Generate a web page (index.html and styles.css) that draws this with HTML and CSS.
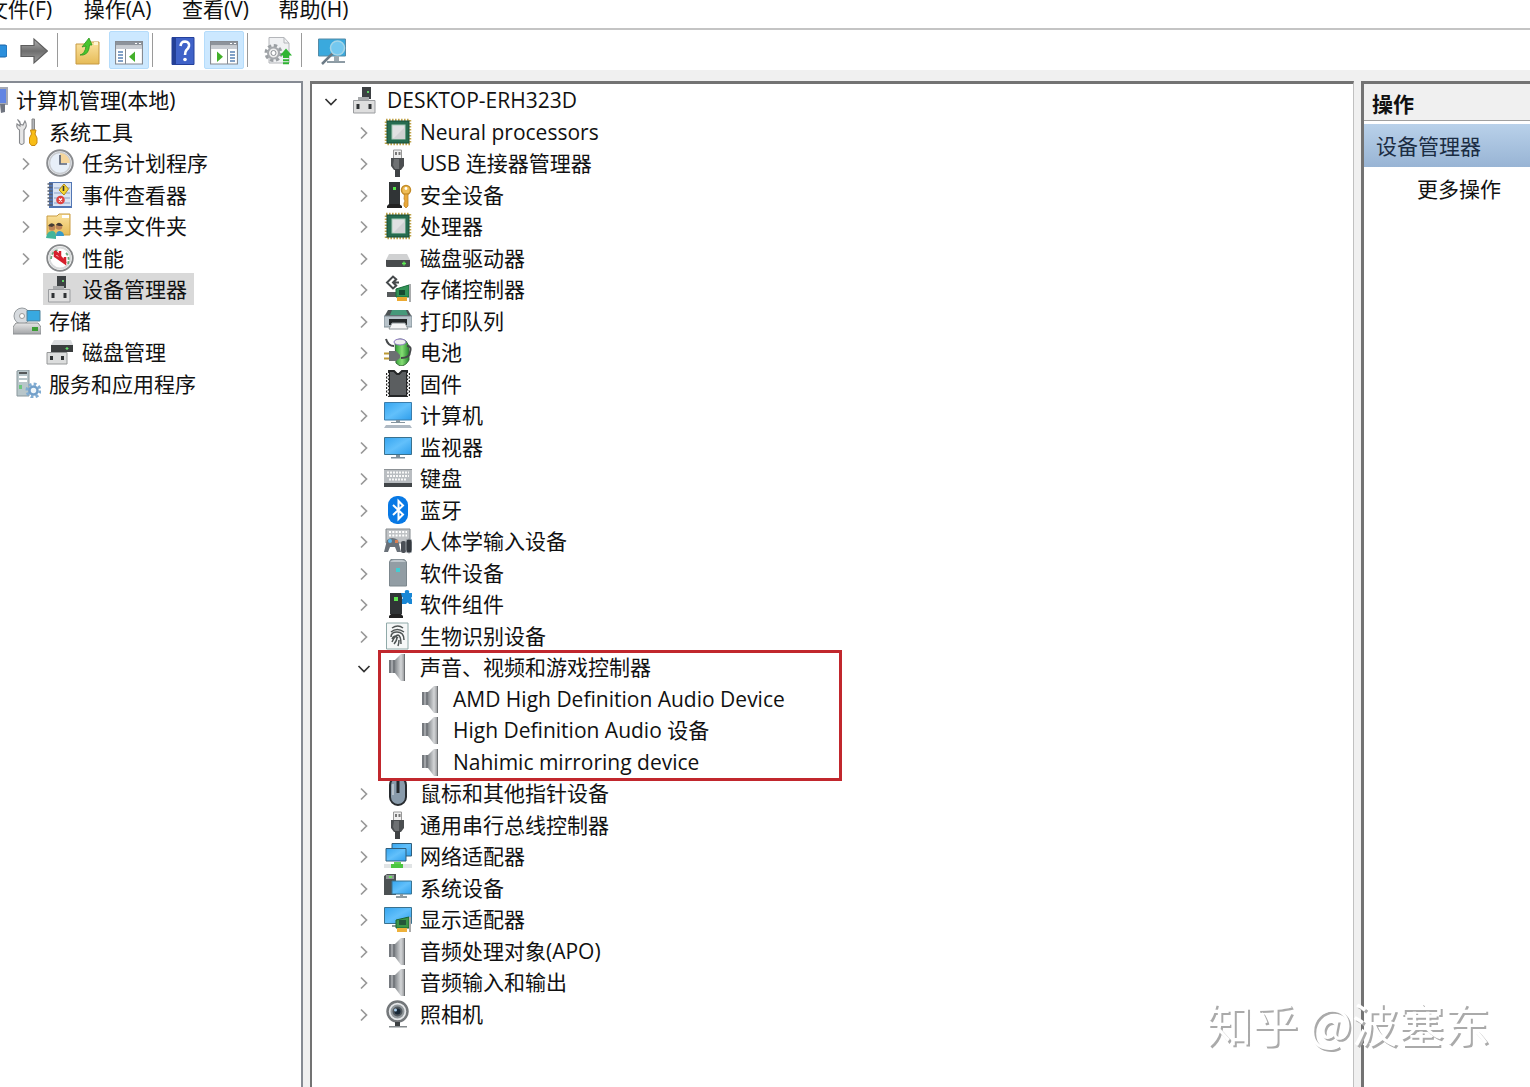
FILE: index.html
```html
<!DOCTYPE html>
<html lang="zh-CN">
	<head>
		<meta charset="UTF-8">
		<title>计算机管理</title>
		<link rel="stylesheet" href="styles.css">
	</head>
	<body>
		<!-- icon set -->
		<svg class="sprite" aria-hidden="true">
			<defs>
				<linearGradient id="gBlue" x1="0" y1="0" x2="1" y2="1"><stop offset="0" stop-color="#35a5f0"/><stop offset=".5" stop-color="#62c0fb"/><stop offset="1" stop-color="#2e9eeb"/></linearGradient>
				<linearGradient id="gMetal" x1="0" y1="0" x2="1" y2="0"><stop offset="0" stop-color="#85898d"/><stop offset=".6" stop-color="#d4d6d8"/><stop offset="1" stop-color="#8c8e91"/></linearGradient>
				<linearGradient id="gSilver" x1="0" y1="0" x2="0" y2="1"><stop offset="0" stop-color="#e6e6e6"/><stop offset="1" stop-color="#a3a5a8"/></linearGradient>
				<linearGradient id="gArrow" x1="0" y1="0" x2="0" y2="1"><stop offset="0" stop-color="#b4b4b4"/><stop offset=".5" stop-color="#6e6e6e"/><stop offset="1" stop-color="#a0a0a0"/></linearGradient>
				<linearGradient id="gFolder" x1="0" y1="0" x2="0" y2="1"><stop offset="0" stop-color="#fbe3a0"/><stop offset="1" stop-color="#e6bb57"/></linearGradient>
				<linearGradient id="gGreen" x1="0" y1="0" x2="1" y2="0"><stop offset="0" stop-color="#2c9a33"/><stop offset=".5" stop-color="#86de74"/><stop offset="1" stop-color="#23832c"/></linearGradient>
			</defs>
			<symbol id="right" viewBox="0 0 12 16"><path d="M3 2.500L8.500 8L3 13.500" fill="none" stroke="#999" stroke-width="1.700"/></symbol>
			<symbol id="down" viewBox="0 0 14 14"><path d="M1.500 5L7 10.500L12.500 5" fill="none" stroke="#333" stroke-width="1.700"/></symbol>
			<symbol id="back" viewBox="0 0 28 28"><path d="M0 14L12 2V8H26Q28 8 28 10V18Q28 20 26 20H12V26Z" fill="#2b8fdc" stroke="#1a64a8"/></symbol>
			<symbol id="forward" viewBox="0 0 28 28"><path d="M1 8.500H14V2L27.500 14L14 26V19.500H1Z" fill="url(#gArrow)" stroke="#5d5d5d" stroke-width="1.200"/></symbol>
			<symbol id="folderup" viewBox="0 0 28 28">
				<path d="M2 7H12L14 5H25V27H2Z" fill="url(#gFolder)" stroke="#c79a42"/>
				<path d="M20 5H24V8H20Z" fill="#fff4cf"/>
				<path d="M6 18Q11 17 12 9L8 10L15 1L18 8L15.500 8Q15 17 9 18Z" fill="#49c52e" stroke="#2c981d" stroke-width=".8"/>
			</symbol>
			<symbol id="paneleft" viewBox="0 0 28 28">
				<path d="M.5 4.500H27.500V27H.5Z" fill="#fff" stroke="#858a91" stroke-width="1.200"/>
				<path d="M1 5H27V8.500H1Z" fill="#8d939b"/><path d="M20 6h2v1h-2zM24 6h2v1h-2z" fill="#fff"/>
				<path d="M1 9H27V12H1Z" fill="#c8ccd2"/>
				<path d="M10.500 12V27" stroke="#858a91"/>
				<path d="M3 15h5M3 18h5M3 21h5M3 24h5" stroke="#5a83b5" stroke-width="1.300"/>
				<path d="M20 14.500V25L14 19.700Z" fill="#43b02a"/>
			</symbol>
			<symbol id="paneright" viewBox="0 0 28 28">
				<path d="M.5 4.500H27.500V27H.5Z" fill="#fff" stroke="#858a91" stroke-width="1.200"/>
				<path d="M1 5H27V8.500H1Z" fill="#8d939b"/><path d="M20 6h2v1h-2zM24 6h2v1h-2z" fill="#fff"/>
				<path d="M1 9H27V12H1Z" fill="#c8ccd2"/>
				<path d="M17.500 12V27" stroke="#858a91"/>
				<path d="M20 15h5M20 18h5M20 21h5M20 24h5" stroke="#5a83b5" stroke-width="1.300"/>
				<path d="M7 14.500V25L13 19.700Z" fill="#43b02a"/>
			</symbol>
			<symbol id="help" viewBox="0 0 28 28">
				<path d="M3 .5H25V27.500H3Z" fill="#3f62c8" stroke="#24409b"/><path d="M3 .5H7V27.500H3Z" fill="#233f96"/>
				<path d="M11.500 9Q12 4.500 16 4.500Q20.500 5 20 9Q19.500 11.500 17.500 13Q16 14.500 16 18" fill="none" stroke="#fff" stroke-width="2.600"/><circle cx="16" cy="22.500" r="1.800" fill="#fff"/>
			</symbol>
			<symbol id="update" viewBox="0 0 28 28">
				<path d="M5 .5H20L25 6V26H5Z" fill="#f0f1f3" stroke="#b4b6ba"/><path d="M20 .5V6H25" fill="none" stroke="#b4b6ba"/>
				<circle cx="9.500" cy="16" r="7.500" fill="none" stroke="#9b9fa3" stroke-width="3" stroke-dasharray="3.400 2.500"/>
				<circle cx="9.500" cy="16" r="5.500" fill="#eee" stroke="#a5a8ac" stroke-width="2"/><circle cx="9.500" cy="16" r="2.500" fill="#fff" stroke="#8e9297"/>
				<path d="M22 11.500L28 18.500H25V21H19V18.500H16ZM19 22.200h6v2h-6zM19 25.300h6v2h-6z" fill="#2fb432"/>
			</symbol>
			<symbol id="scan" viewBox="0 0 28 28">
				<path d="M.5 2H27.500V19H.5Z" fill="#3aa9dd" stroke="#558ba6"/><path d="M9 24h18v2H9z" fill="#8d9ba4"/><path d="M16 19h5v5h-5z" fill="#9daab2"/>
				<path d="M4 27L15 16" stroke="#6c7b86" stroke-width="2.500"/><circle cx="19.500" cy="11" r="7" fill="#74c8ef" stroke="#a5d5e7" stroke-width="1.500"/>
			</symbol>
			<symbol id="mgmt" viewBox="0 0 28 28"><path d="M4 2H27V18H4Z" fill="#6285e2" stroke="#a6a9b3" stroke-width="2"/><path d="M20 18h5v8l-4 1z" fill="#707580"/></symbol>
			<symbol id="tools" viewBox="0 0 28 28">
				<path d="M4.500 1.500L7 4V8L4 6Q3 10 6.500 12V25Q8.500 28 11 25V12Q15 8 12 3L10 7L8 6.500Z" fill="#e6e6e6" stroke="#85878b" stroke-width="1.100"/>
				<path d="M19 1H21.500V12H19Z" fill="#b2b5b9" stroke="#888"/><path d="M17.500 12H23L22 16L24 20V25L22 27.500H18.500L16.500 25V20L18.500 16Z" fill="#f8bd16" stroke="#c88910"/>
			</symbol>
			<symbol id="clock" viewBox="0 0 28 28"><circle cx="14" cy="14" r="12.800" fill="#f5f7fa" stroke="#8b8d90" stroke-width="2"/><circle cx="14" cy="14" r="10.500" fill="#e7eff8" stroke="#c9ccd0" stroke-width="1.500"/><path d="M14 4A10 10 0 0 1 24 14H14Z" fill="#f4d59c"/><path d="M14 6V15H21" fill="none" stroke="#596376" stroke-width="1.700"/></symbol>
			<symbol id="events" viewBox="0 0 28 28"><path d="M3 1H26V27H3Z" fill="#5276b4"/><path d="M7 2H25V25H7Z" fill="#dae4f3"/><path d="M8 7h16M8 12h16M8 17h16M8 22h16" stroke="#8ba1c8"/><path d="M1.500 3h5M1.500 6.500h5M1.500 10h5M1.500 13.500h5M1.500 17h5M1.500 20.500h5M1.500 24h5" stroke="#59616f" stroke-width="1.500"/><path d="M18 3L22.500 8L18 14L13 9Z" fill="#f5d738" stroke="#b58e17"/><path d="M17.500 5v5" stroke="#333" stroke-width="1.600"/><circle cx="14.500" cy="19" r="4.300" fill="#df413f"/><path d="M13 17.500l3 3m0-3l-3 3" stroke="#fff" stroke-width="1.300"/></symbol>
			<symbol id="share" viewBox="0 0 28 28"><path d="M1 4H11L13 2H24V23H1Z" fill="url(#gFolder)" stroke="#c99c43"/><path d="M16 3h7v3h-7z" fill="#fff"/><path d="M0 26Q1 19 6 19Q10 19 10 24V27Z" fill="#42b59b"/><path d="M10 24Q10 19 14 19Q18 20 18 24Z" fill="#3899c7"/><circle cx="6" cy="15.500" r="3.300" fill="#bd8557"/><circle cx="13" cy="14.500" r="3.300" fill="#bd8557"/><path d="M2 14Q5 9 9 13L6 15ZM10 13Q13 8 17 14L13 14Z" fill="#453c35"/></symbol>
			<symbol id="perf" viewBox="0 0 28 28"><circle cx="14" cy="14" r="12.800" fill="#fff" stroke="#858789" stroke-width="1.800"/><circle cx="14" cy="14" r="10.500" fill="none" stroke="#d9dbdc" stroke-width="2"/><path d="M5 15Q6 6 13 6M20 9Q24 13 22 20" fill="none" stroke="#69a67a" stroke-width="1.800" stroke-dasharray="3 1.500"/><path d="M9 7V12L19 19V13M9 7L20 19M14 7V12" fill="none" stroke="#d6202c" stroke-width="2.500"/></symbol>
			<symbol id="devmgr" viewBox="0 0 28 28"><path d="M11 1H20V13H11Z" fill="#3d4143"/><path d="M16 5h2v2h-2z" fill="#60d165"/><path d="M7 11H18V15H7Z" fill="#a9abad"/><path d="M2.500 14.500H24V27H2.500Z" fill="#dedede" stroke="#9b9da0"/><path d="M5.500 18h3v5h-3zM17.500 18h3v5h-3z" fill="#2f3234"/></symbol>
			<symbol id="storage" viewBox="0 0 28 28"><circle cx="9" cy="9" r="8" fill="#d7dbdf" stroke="#969b9f"/><circle cx="9" cy="9" r="2.500" fill="#fff" stroke="#999"/><path d="M14 3.500H27V14H14Z" fill="#38a9e1" stroke="#4f819a"/><path d="M3 16H25L28 20V27H0V20Z" fill="url(#gSilver)" stroke="#8d9092"/><path d="M19 20h6v4h-6z" fill="#3e9d37"/></symbol>
			<symbol id="diskmgr" viewBox="0 0 28 28"><path d="M8 2H25L27 7H5Z" fill="#dbdddf"/><path d="M5 7H27V14H5Z" fill="#3b3e3f"/><path d="M21 9v3m-1.500-1.500h3" stroke="#60de69" stroke-width="1.200"/><path d="M1 14.500H21V26H1Z" fill="#dcdddd" stroke="#969899"/><path d="M4 18h3v4H4zM15 18h3v4h-3z" fill="#2f3234"/></symbol>
			<symbol id="services" viewBox="0 0 28 28"><path d="M4 1L7 0H16V26H4Z" fill="#b8c6ca" stroke="#89979c"/><path d="M6 3h8" stroke="#333" stroke-width="1.500"/><path d="M6 7h8M6 11h8" stroke="#fff" stroke-width="1.800"/><path d="M6 15h3v4H6z" fill="#6bc67d"/><circle cx="20.500" cy="20.500" r="6.500" fill="none" stroke="#80acd2" stroke-width="3" stroke-dasharray="2.800 2.200"/><circle cx="20.500" cy="20.500" r="4" fill="#eef5fa" stroke="#719fc9" stroke-width="2.500"/></symbol>
			<symbol id="cpu" viewBox="0 0 28 28"><rect x="2" y="2" width="24" height="24" fill="none" stroke="#c1a54c" stroke-width="2.500" stroke-dasharray="1.600 1.400"/><rect x="3" y="3" width="22" height="22" fill="#266c50" stroke="#174d39"/><rect x="8" y="7" width="13" height="14" fill="#e0e1e2" stroke="#a6cbb8"/><path d="M21 9V21H9Z" fill="#d0d2d4"/></symbol>
			<symbol id="usb" viewBox="0 0 28 28"><path d="M9.500 1H17.500V10H9.500Z" fill="#eee" stroke="#999"/><path d="M11 3h2v3h-2zM14.500 3h2v3h-2z" fill="#777"/><path d="M7 9H20V17L17 21H10L7 17Z" fill="#4b4e50"/><path d="M10 10H15V20H11L9 16Z" fill="#6e7173"/><path d="M11 20H16V28H11Z" fill="#3f4244"/></symbol>
			<symbol id="security" viewBox="0 0 28 28"><path d="M5 1H16V24H5Z" fill="#303436"/><path d="M3 27V25L5 23H15L18 25V27Z" fill="#222"/><path d="M9 6h3v3H9z" fill="#55e548"/><circle cx="22" cy="9" r="4.500" fill="#efbd55" stroke="#c38b27" stroke-width="1.500"/><circle cx="22" cy="7.500" r="1.400" fill="#fff"/><path d="M20.500 13H24V25L22 27L20 25V22L21 20L20 18Z" fill="#eaa93a" stroke="#bf8526" stroke-width=".8"/></symbol>
			<symbol id="disk" viewBox="0 0 28 28"><path d="M5 10H23L26 16H2Z" fill="#d0d1d2"/><path d="M2 16H26V22Q26 23 25 23H3Q2 23 2 22Z" fill="#484b4d"/><path d="M20 17.500v4m-2-2h4" stroke="#5ceb55" stroke-width="1.300"/></symbol>
			<symbol id="controller" viewBox="0 0 28 28"><path d="M13 5L9 1.500L3 7.500L9 13.500L13 10M15 7.500H9M12 4.500L9 7.500L12 10.500" fill="none" stroke="#45494b" stroke-width="2"/><path d="M3 17H14V22H3Z" fill="#565a5c"/><path d="M12 14L25 10V22H12Z" fill="#329256" stroke="#176b3a"/><path d="M15 15h6v5h-6z" fill="#184a31"/><path d="M26 9V27" stroke="#a9abac" stroke-width="2"/><path d="M13 22H23V26H13Z" fill="#ecaa32"/></symbol>
			<symbol id="printer" viewBox="0 0 28 28"><path d="M4 3H24L28 10H0Z" fill="#4c5355"/><path d="M8 3H22L24 8H6Z" fill="#46997a"/><path d="M0 9H28V20H0Z" fill="#b8c3ca" stroke="#7e8c94"/><path d="M5 12H23V18H5Z" fill="#242829"/><path d="M8 16H21L24 22H5Z" fill="#f5f5f5" stroke="#8e9598"/></symbol>
			<symbol id="battery" viewBox="0 0 28 28"><path d="M11 3Q16-1 22 3L25 8V22Q22 28 16 28L12 25Z" fill="url(#gGreen)" stroke="#3b6c3d"/><ellipse cx="16" cy="4" rx="6" ry="3" fill="#eee" stroke="#8d78c4"/><path d="M2 1Q4 8 10 8M23 8Q28 8 26 14Q26 20 17 20" fill="none" stroke="#45484a" stroke-width="2"/><path d="M0 15.500h8M0 20.500h8" stroke="#bd9a35" stroke-width="2"/><path d="M5 13H12L16 17V20L12 23H5Z" fill="#6c7072"/></symbol>
			<symbol id="firmware" viewBox="0 0 28 28"><path d="M5 1H10L13 4H15L18 1H23V26H5Z" fill="#5b5e60" stroke="#252728" stroke-width="2"/><path d="M4 3V26M24 3V26" stroke="#222" stroke-width="4" stroke-dasharray="2 1.500"/><path d="M4 3V26M24 3V26" stroke="#ddd" stroke-width="2" stroke-dasharray="2 1.500"/></symbol>
			<symbol id="computer" viewBox="0 0 28 28"><path d="M.5 1.500H27.500V19H.5Z" fill="url(#gBlue)" stroke="#3a7dac"/><path d="M12 19h4v2h-4zM7 21h14v1H7z" fill="#8796a0"/><path d="M2 24H26L28 27H0Z" fill="#afb9c3"/></symbol>
			<symbol id="monitor" viewBox="0 0 28 28"><path d="M.5 4.500H27.500V21.500H.5Z" fill="url(#gBlue)" stroke="#3a718e"/><path d="M12 22h4v2h-4zM7 24h14v1.500H7z" fill="#7f909b"/></symbol>
			<symbol id="keyboard" viewBox="0 0 28 28"><path d="M0 5H28V19H0Z" fill="#b9bdc1"/><path d="M0 19H28V23H0Z" fill="#424649"/><path d="M3 8.500h22M3 12h22M5 15.500h18" stroke="#f8f8f8" stroke-width="2" stroke-dasharray="2 1"/><path d="M0 5.500H28" stroke="#8d9296"/></symbol>
			<symbol id="bluetooth" viewBox="0 0 28 28"><rect x="4" y="0" width="20" height="28" rx="9" fill="#0879e5"/><path d="M9 9L19 18.500L14.500 23V5L19 9.500L9 19" fill="none" stroke="#fff" stroke-width="2"/></symbol>
			<symbol id="hid" viewBox="0 0 28 28"><path d="M2 2H26V16H2Z" fill="#bfc2c5" stroke="#84898d"/><path d="M5 5h18M5 8.500h18" stroke="#fff" stroke-width="2" stroke-dasharray="2 1.300"/><path d="M3 13Q8 9 14 13L17 25H13L11 20H6L4 25H0Z" fill="#697078"/><circle cx="6" cy="14" r="2" fill="#5bb7ea"/><path d="M11 13h3v3h-3z" fill="#da8053"/><rect x="17" y="14" width="5" height="12" rx="2" fill="#4b5057"/><rect x="22" y="12" width="6" height="14" rx="3" fill="#353a40" stroke="#949aa0"/></symbol>
			<symbol id="softdev" viewBox="0 0 28 28"><path d="M5.500 3Q6 0 9 0H18Q21 0 22.500 3V27H5.500Z" fill="#929da4" stroke="#7c878d"/><path d="M6 3Q8 1 10 1H18Q20 1 22 3Z" fill="#bfc7cc"/><path d="M12 9h4v4h-4z" fill="#43cdd3"/></symbol>
			<symbol id="softcomp" viewBox="0 0 28 28"><path d="M6 3H18V24H6Z" fill="#303436"/><path d="M5 28V26L7 24H17L19 26V28Z" fill="#222"/><path d="M10 7h4v4h-4z" fill="#5de64e"/><path d="M17 3H21Q20 0 23 0Q26 0 25 3H28V7Q26 8 28 9V14H25Q24 11 22 14H18V9Q20 8 18 7Z" fill="#1987d5"/></symbol>
			<symbol id="finger" viewBox="0 0 28 28"><path d="M2.500 1H24V27H2.500Z" fill="#f6f8f8" stroke="#90aaa9"/><path d="M8 6Q14 2 19 6M7 10Q13 5 20 10M7 15Q7 10 13 10Q20 10 20 18M8 20Q11 13 14 13Q17 14 17 22M10 22Q13 19 13 15M8 17Q10 12 14 16M14 24Q15 21 15 18" fill="none" stroke="#4f5555" stroke-width="1.500"/></symbol>
			<symbol id="speaker" viewBox="0 0 28 28"><path d="M5 7H11V20H5Z" fill="#75797e"/><path d="M7 7h2v13H7z" fill="#a1a4a8"/><path d="M11 7L17 1H21V28H17L11 20Z" fill="url(#gMetal)"/><path d="M20.500 1V28" stroke="#6f7275"/></symbol>
			<symbol id="mouse" viewBox="0 0 28 28"><rect x="6" y="-2" width="16" height="28" rx="8" fill="#899bab" stroke="#272b2f" stroke-width="2"/><path d="M14 0V14" stroke="#25292c" stroke-width="3"/><path d="M9 5V16" stroke="#d5dce1" stroke-width="1.200"/></symbol>
			<symbol id="network" viewBox="0 0 28 28"><path d="M8 1.500H27.500V14H8Z" fill="url(#gBlue)" stroke="#315f7c"/><path d="M2 6.500H22V19H2Z" fill="url(#gBlue)" stroke="#315f7c"/><path d="M10 20h7v3h-7z" fill="#62d154"/><path d="M0 22H28V26H0Z" fill="#e1e4e5"/><path d="M7 22H19V26H7Z" fill="#4cc540"/></symbol>
			<symbol id="system" viewBox="0 0 28 28"><path d="M0 2L3 0H12V21H0Z" fill="#4c5153"/><path d="M2 1h8v4H2z" fill="#8d9593"/><path d="M5 2h3v2H5z" fill="#6ade60"/><path d="M8 7H27.500V20H8Z" fill="url(#gBlue)" stroke="#3b7593"/><path d="M16 20h3v2h-3zM12 22h11v2H12z" fill="#8e9aa0"/></symbol>
			<symbol id="display" viewBox="0 0 28 28"><path d="M.5 2.500H27.500V18.500H.5Z" fill="url(#gBlue)" stroke="#3a718e"/><path d="M8 20h5v2H8z" fill="#899"/><path d="M12 15L25 12V23H12Z" fill="#3b9547" stroke="#1d6430"/><path d="M15 15h7v5h-7z" fill="#24563a"/><path d="M26 12V27" stroke="#aaa" stroke-width="2"/><path d="M13 23H23V27H13Z" fill="#eeb13b"/></symbol>
			<symbol id="camera" viewBox="0 0 28 28"><circle cx="13.500" cy="11.500" r="10" fill="#e5e7e9" stroke="#73777a" stroke-width="2.500"/><circle cx="13.500" cy="11.500" r="6" fill="#51585e" stroke="#92989c" stroke-width="2"/><circle cx="13.500" cy="11.500" r="3" fill="#182735"/><circle cx="11.500" cy="10" r="1.500" fill="#a8cbea"/><path d="M11 22h5v4h-5z" fill="#3c4042"/><path d="M5 26H23V27.500H5Z" fill="#858a8d"/></symbol>
		</svg>

		<nav class="menubar">
			<button>文件(F)</button>
			<button>操作(A)</button>
			<button>查看(V)</button>
			<button>帮助(H)</button>
		</nav>

		<div class="toolbar">
			<button aria-label="后退"><svg class="icon"><use href="#back"/></svg></button>
			<button aria-label="前进"><svg class="icon"><use href="#forward"/></svg></button>
			<span class="sep"></span>
			<button aria-label="向上"><svg class="icon"><use href="#folderup"/></svg></button>
			<button class="on" aria-label="显示控制台树"><svg class="icon"><use href="#paneleft"/></svg></button>
			<span class="sep"></span>
			<button aria-label="帮助"><svg class="icon"><use href="#help"/></svg></button>
			<button class="on" aria-label="显示操作窗格"><svg class="icon"><use href="#paneright"/></svg></button>
			<span class="sep"></span>
			<button aria-label="更新驱动程序"><svg class="icon"><use href="#update"/></svg></button>
			<span class="sep"></span>
			<button aria-label="扫描检测硬件改动"><svg class="icon"><use href="#scan"/></svg></button>
		</div>

		<main class="panes">
			<section class="pane console">
				<ul class="tree">
					<li><span class="none"></span><span class="node"><svg class="icon"><use href="#mgmt"/></svg>计算机管理(本地)</span></li>
					<li class="l1"><span class="none"></span><span class="node"><svg class="icon"><use href="#tools"/></svg>系统工具</span></li>
					<li class="l2"><button aria-label="展开"><svg><use href="#right"/></svg></button><span class="node"><svg class="icon"><use href="#clock"/></svg>任务计划程序</span></li>
					<li class="l2"><button aria-label="展开"><svg><use href="#right"/></svg></button><span class="node"><svg class="icon"><use href="#events"/></svg>事件查看器</span></li>
					<li class="l2"><button aria-label="展开"><svg><use href="#right"/></svg></button><span class="node"><svg class="icon"><use href="#share"/></svg>共享文件夹</span></li>
					<li class="l2"><button aria-label="展开"><svg><use href="#right"/></svg></button><span class="node"><svg class="icon"><use href="#perf"/></svg>性能</span></li>
					<li class="l2"><span class="none"></span><span class="node selected"><svg class="icon"><use href="#devmgr"/></svg>设备管理器</span></li>
					<li class="l1"><span class="none"></span><span class="node"><svg class="icon"><use href="#storage"/></svg>存储</span></li>
					<li class="l2"><span class="none"></span><span class="node"><svg class="icon"><use href="#diskmgr"/></svg>磁盘管理</span></li>
					<li class="l1"><span class="none"></span><span class="node"><svg class="icon"><use href="#services"/></svg>服务和应用程序</span></li>
				</ul>
			</section>

			<section class="pane devices">
				<ul class="tree">
					<li><button aria-label="折叠"><svg><use href="#down"/></svg></button><span class="node"><svg class="icon"><use href="#devmgr"/></svg>DESKTOP-ERH323D</span></li>
					<li class="l1"><button aria-label="展开"><svg><use href="#right"/></svg></button><span class="node"><svg class="icon"><use href="#cpu"/></svg>Neural processors</span></li>
					<li class="l1"><button aria-label="展开"><svg><use href="#right"/></svg></button><span class="node"><svg class="icon"><use href="#usb"/></svg>USB 连接器管理器</span></li>
					<li class="l1"><button aria-label="展开"><svg><use href="#right"/></svg></button><span class="node"><svg class="icon"><use href="#security"/></svg>安全设备</span></li>
					<li class="l1"><button aria-label="展开"><svg><use href="#right"/></svg></button><span class="node"><svg class="icon"><use href="#cpu"/></svg>处理器</span></li>
					<li class="l1"><button aria-label="展开"><svg><use href="#right"/></svg></button><span class="node"><svg class="icon"><use href="#disk"/></svg>磁盘驱动器</span></li>
					<li class="l1"><button aria-label="展开"><svg><use href="#right"/></svg></button><span class="node"><svg class="icon"><use href="#controller"/></svg>存储控制器</span></li>
					<li class="l1"><button aria-label="展开"><svg><use href="#right"/></svg></button><span class="node"><svg class="icon"><use href="#printer"/></svg>打印队列</span></li>
					<li class="l1"><button aria-label="展开"><svg><use href="#right"/></svg></button><span class="node"><svg class="icon"><use href="#battery"/></svg>电池</span></li>
					<li class="l1"><button aria-label="展开"><svg><use href="#right"/></svg></button><span class="node"><svg class="icon"><use href="#firmware"/></svg>固件</span></li>
					<li class="l1"><button aria-label="展开"><svg><use href="#right"/></svg></button><span class="node"><svg class="icon"><use href="#computer"/></svg>计算机</span></li>
					<li class="l1"><button aria-label="展开"><svg><use href="#right"/></svg></button><span class="node"><svg class="icon"><use href="#monitor"/></svg>监视器</span></li>
					<li class="l1"><button aria-label="展开"><svg><use href="#right"/></svg></button><span class="node"><svg class="icon"><use href="#keyboard"/></svg>键盘</span></li>
					<li class="l1"><button aria-label="展开"><svg><use href="#right"/></svg></button><span class="node"><svg class="icon"><use href="#bluetooth"/></svg>蓝牙</span></li>
					<li class="l1"><button aria-label="展开"><svg><use href="#right"/></svg></button><span class="node"><svg class="icon"><use href="#hid"/></svg>人体学输入设备</span></li>
					<li class="l1"><button aria-label="展开"><svg><use href="#right"/></svg></button><span class="node"><svg class="icon"><use href="#softdev"/></svg>软件设备</span></li>
					<li class="l1"><button aria-label="展开"><svg><use href="#right"/></svg></button><span class="node"><svg class="icon"><use href="#softcomp"/></svg>软件组件</span></li>
					<li class="l1"><button aria-label="展开"><svg><use href="#right"/></svg></button><span class="node"><svg class="icon"><use href="#finger"/></svg>生物识别设备</span></li>
					<li class="l1 sound"><button aria-label="折叠"><svg><use href="#down"/></svg></button><span class="node"><svg class="icon"><use href="#speaker"/></svg>声音、视频和游戏控制器</span><span class="mark"></span></li>
					<li class="l2"><span class="none"></span><span class="node"><svg class="icon"><use href="#speaker"/></svg>AMD High Definition Audio Device</span></li>
					<li class="l2"><span class="none"></span><span class="node"><svg class="icon"><use href="#speaker"/></svg>High Definition Audio 设备</span></li>
					<li class="l2"><span class="none"></span><span class="node"><svg class="icon"><use href="#speaker"/></svg>Nahimic mirroring device</span></li>
					<li class="l1"><button aria-label="展开"><svg><use href="#right"/></svg></button><span class="node"><svg class="icon"><use href="#mouse"/></svg>鼠标和其他指针设备</span></li>
					<li class="l1"><button aria-label="展开"><svg><use href="#right"/></svg></button><span class="node"><svg class="icon"><use href="#usb"/></svg>通用串行总线控制器</span></li>
					<li class="l1"><button aria-label="展开"><svg><use href="#right"/></svg></button><span class="node"><svg class="icon"><use href="#network"/></svg>网络适配器</span></li>
					<li class="l1"><button aria-label="展开"><svg><use href="#right"/></svg></button><span class="node"><svg class="icon"><use href="#system"/></svg>系统设备</span></li>
					<li class="l1"><button aria-label="展开"><svg><use href="#right"/></svg></button><span class="node"><svg class="icon"><use href="#display"/></svg>显示适配器</span></li>
					<li class="l1"><button aria-label="展开"><svg><use href="#right"/></svg></button><span class="node"><svg class="icon"><use href="#speaker"/></svg>音频处理对象(APO)</span></li>
					<li class="l1"><button aria-label="展开"><svg><use href="#right"/></svg></button><span class="node"><svg class="icon"><use href="#speaker"/></svg>音频输入和输出</span></li>
					<li class="l1"><button aria-label="展开"><svg><use href="#right"/></svg></button><span class="node"><svg class="icon"><use href="#camera"/></svg>照相机</span></li>
				</ul>
			</section>

			<aside class="pane actions">
				<h2>操作</h2>
				<h3>设备管理器</h3>
				<button>更多操作</button>
			</aside>
		</main>

		<div class="watermark">知乎 @波塞东</div>
	</body>
</html>
```

FILE: styles.css
```css
*{
	margin: 0;
	padding: 0;
	box-sizing: border-box;
}
body{
	display: flex;
	flex-direction: column;
	min-height: 100vh;
	overflow-x: hidden;
	background: #f0f0f0;
	color: #111;
	font-family: "Open Sans", "Noto Sans CJK SC", sans-serif;
	font-size: 21px;
	line-height: 30px;
}
button{
	border: none;
	background: none;
	color: inherit;
	font: inherit;
}
.sprite{
	position: absolute;
	width: 0;
	height: 0;
}
.icon{
	flex: none;
	width: 28px;
	height: 28px;
}

/* menu and toolbar */
.menubar{
	display: flex;
	align-items: flex-start;
	gap: 27px;
	height: 36px;
	margin-top: -6px;
	margin-left: -16px;
	background: #fff;
	border-bottom: 2px solid #c4c4c4;
}
.menubar button{
	min-width: 71px;
	white-space: nowrap;
}
.toolbar{
	display: flex;
	align-items: center;
	gap: 1px;
	height: 40px;
	margin-left: -27px;
	background: #fff;
}
.toolbar button{
	display: flex;
	align-items: center;
	justify-content: center;
	width: 40px;
	height: 38px;
	padding-top: 2px;
}
.toolbar button.on{
	background: #cce8ff;
	border: 1px solid #b5dcfb;
	border-radius: 2px;
}
.toolbar .sep{
	width: 1px;
	height: 34px;
	margin: 0 9px 0 2px;
	background: #9a9a9a;
}

/* the three panes */
.panes{
	flex: 1;
	display: grid;
	grid-template-columns: 303px 1fr 169px;
	column-gap: 7px;
	padding-top: 11px;
}
.pane{
	overflow: hidden;
	background: #fff;
	border-top: 3px solid #737373;
	border-left: 3px solid #737373;
}
.console{
	padding-top: 1px;
	border-top: 2px solid #868b93;
	border-left: none;
	border-right: 2px solid #868b93;
}
.devices{
	border-right: 1px solid #c0c0c0;
	border-left-width: 2px;
}

/* rows */
.tree{
	display: grid;
	grid-auto-rows: 32px 31px;
	padding-left: 9px;
	list-style: none;
}
.console .tree{
	margin-left: -59px;
}
.tree li{
	display: flex;
	align-items: center;
	gap: 7px;
}
.tree .l1{
	padding-left: 33px;
}
.tree .l2{
	padding-left: 66px;
}
.tree button, .tree .none{
	display: flex;
	align-items: center;
	justify-content: center;
	flex: none;
	width: 20px;
	height: 20px;
}
.tree button{
	padding-top: 2px;
}
.tree button svg{
	width: 14px;
	height: 16px;
}
.node{
	display: flex;
	align-items: center;
	gap: 8px;
	height: 100%;
	padding: 0 7px 0 3px;
	white-space: nowrap;
}
.node.selected{
	background: #d9d9d9;
}
.sound{
	position: relative;
}
.mark{
	position: absolute;
	top: -1px;
	left: 57px;
	width: 464px;
	height: 131px;
	border: 3px solid #c1272d;
}

/* actions */
.actions h2{
	height: 37px;
	padding-left: 8px;
	background: #f0f0f0;
	border-bottom: 1px solid #a0a0a0;
	font-size: 21px;
	line-height: 40px;
}
.actions h3{
	height: 43px;
	margin-top: 3px;
	padding-left: 12px;
	background: linear-gradient(#b9d1ea, #98b4d4);
	color: #1b2c42;
	font-size: 21px;
	font-weight: normal;
	line-height: 44px;
}
.actions button{
	height: 43px;
	padding-left: 53px;
}

.watermark{
	position: fixed;
	right: 40px;
	bottom: 35px;
	color: #fff;
	font-family: "Noto Sans CJK SC", sans-serif;
	font-size: 46px;
	line-height: 60px;
	text-shadow: 2px 2px #aaa;
}
```
